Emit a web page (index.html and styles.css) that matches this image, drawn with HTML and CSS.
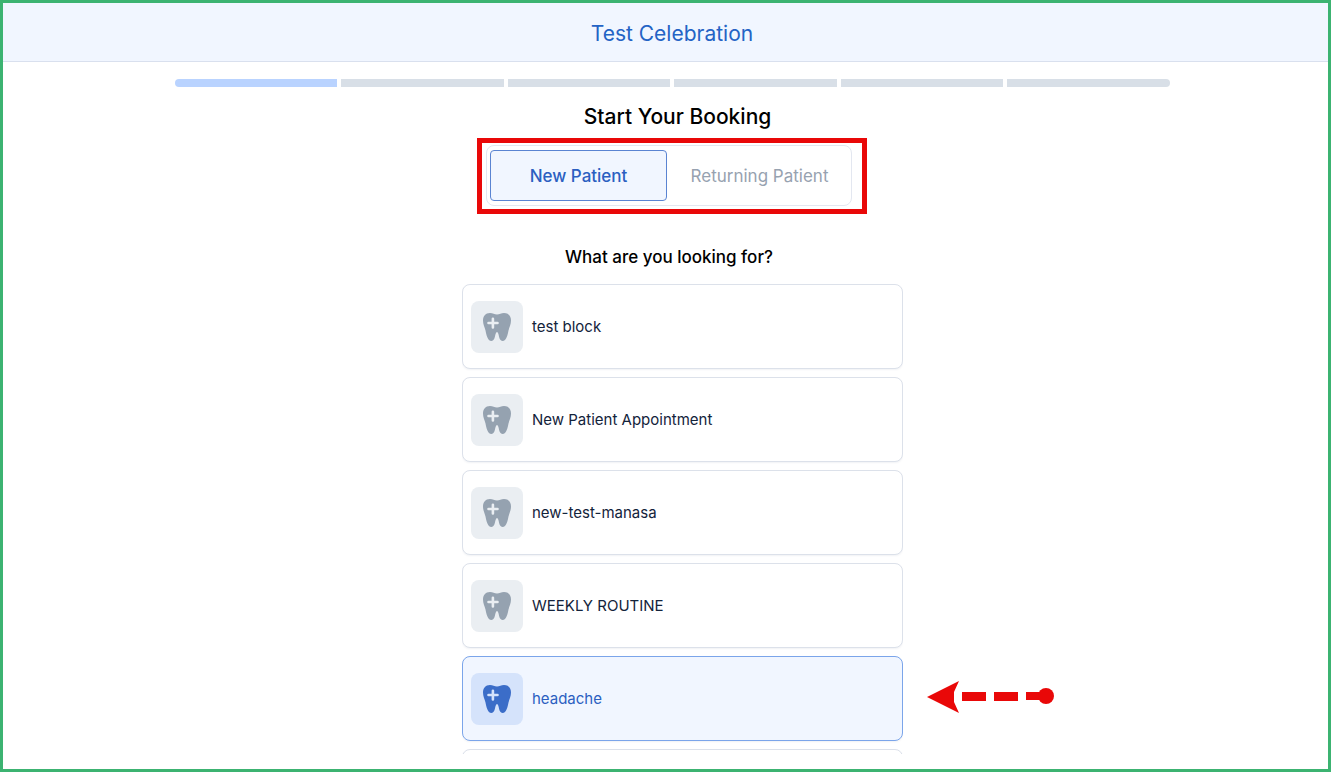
FILE: index.html
```html
<!DOCTYPE html>
<html lang="en">
<head>
    <meta charset="UTF-8">
    <meta name="viewport" content="width=device-width, initial-scale=1.0">
    <title>Test Celebration</title>
    <link rel="stylesheet" href="styles.css">
</head>
<body>
    <svg class="sprite" aria-hidden="true">
        <symbol id="tooth" viewBox="0 0 28 28">
            <path fill-rule="evenodd" d="M7 0C2.400 0 0 3.200 0 7.500c0 4.100 1.700 6.600 2.500 10C3.400 21.700 4.500 28 8.500 28c4.300 0 3.200-9 5.500-9S15.200 28 19.500 28c4 0 5.100-6.300 6-10.500.8-3.400 2.500-5.900 2.500-10C28 3.200 25.600 0 21 0c-2.800 0-4.500 1.400-7 1.400S9.800 0 7 0zM9.900 4.500a1.300 1.300 0 0 1 1.300 1.300V8.700h3.300a1.300 1.300 0 0 1 0 2.600H11.200v3.200a1.300 1.300 0 0 1-2.600 0V11.300H5.500a1.300 1.300 0 0 1 0-2.600H8.600V5.800A1.300 1.300 0 0 1 9.900 4.500z"/>
        </symbol>
    </svg>

    <header class="header">
        <h1>Test Celebration</h1>
    </header>

    <main>
        <div class="progress">
            <span class="step done"></span>
            <span class="step"></span>
            <span class="step"></span>
            <span class="step"></span>
            <span class="step"></span>
            <span class="step"></span>
        </div>

        <h2>Start Your Booking</h2>

        <div class="highlight">
            <div class="toggle">
                <button type="button" class="active">New Patient</button>
                <button type="button">Returning Patient</button>
            </div>
        </div>

        <h3>What are you looking for?</h3>

        <div class="services">
            <div class="list">
                <button type="button" class="card">
                    <span class="icon"><svg><use href="#tooth"/></svg></span>
                    test block
                </button>
                <button type="button" class="card">
                    <span class="icon"><svg><use href="#tooth"/></svg></span>
                    New Patient Appointment
                </button>
                <button type="button" class="card">
                    <span class="icon"><svg><use href="#tooth"/></svg></span>
                    new-test-manasa
                </button>
                <button type="button" class="card">
                    <span class="icon"><svg><use href="#tooth"/></svg></span>
                    WEEKLY ROUTINE
                </button>
                <button type="button" class="card selected">
                    <span class="icon"><svg><use href="#tooth"/></svg></span>
                    headache
                </button>
                <button type="button" class="card"></button>
            </div>
            <svg class="arrow" viewBox="0 0 128 32" aria-hidden="true">
                <path d="M0 16L32 0L27 11V21L32 32z"/>
                <path d="M35 11h24v9H35zM67 11h24v9H67zM99 11h16v8H99z"/>
                <circle cx="119" cy="15" r="8"/>
            </svg>
        </div>
    </main>
</body>
</html>
```
FILE: styles.css
```css
* {
    box-sizing: border-box;
}

body {
    margin: 0;
    height: 100vh;
    overflow: hidden;
    border: 3px solid #3cb371;
    background: #fff;
    color: #000;
    font-family: Inter, "Liberation Sans", sans-serif;
}

h1, h2, h3 {
    margin: 0;
    font-weight: 500;
    text-align: center;
}

button {
    font-family: inherit;
    cursor: pointer;
}

.sprite {
    display: none;
}

.header {
    height: 59px;
    padding: 15px 0 0 13px;
    background: #f1f6ff;
    border-bottom: 1px solid #d9e0ee;
}

.header h1 {
    color: #2463c5;
    font-size: 21px;
    font-weight: 400;
    line-height: 32px;
}

main {
    display: flex;
    flex-direction: column;
    align-items: center;
    padding: 17px 0 0 13px;
}

.progress {
    display: flex;
    gap: 4px;
    width: 100%;
    max-width: 995px;
    height: 8px;
    border-radius: 4px;
    overflow: hidden;
}

.step {
    flex: 1;
    background: #d8dfe7;
}

.step.done {
    background: #b9d3ff;
}

h2 {
    margin: 14px 0 5px;
    padding-left: 11px;
    font-size: 21px;
    line-height: 32px;
}

.highlight {
    width: 390px;
    padding: 2px 10px 3px 4px;
    border: 5px solid #e90808;
}

.toggle {
    display: flex;
    gap: 4px;
    padding: 4px 3px;
    border: 1px solid #e3e7f0;
    border-radius: 8px;
}

.toggle button {
    flex: 1;
    height: 51px;
    padding: 0;
    border: 1px solid transparent;
    border-radius: 4px;
    background: none;
    color: #97a2b0;
    font-size: 17px;
}

.toggle .active {
    border-color: #5a84d2;
    background: #f1f6ff;
    color: #2b5fc1;
    font-weight: 500;
}

h3 {
    margin: 31px 6px 15px 0;
    font-size: 17px;
    line-height: 24px;
}

.services {
    position: relative;
    width: 441px;
    margin-left: 21px;
}

.list {
    display: flex;
    flex-direction: column;
    gap: 8px;
    max-height: calc(100vh - 302px);
    overflow: hidden;
}

.card {
    display: flex;
    flex: none;
    align-items: center;
    gap: 9px;
    height: 85px;
    padding: 0 8px;
    border: 1px solid #dce1ea;
    border-radius: 8px;
    background: #fff;
    box-shadow: 0 1px 2px rgba(20, 40, 80, 0.06);
    color: #13233b;
    font-size: 15px;
    text-align: left;
}

.icon {
    display: flex;
    align-items: center;
    justify-content: center;
    width: 52px;
    height: 52px;
    border-radius: 8px;
    background: #eaeef2;
    color: #95a2b0;
}

.icon svg {
    width: 28px;
    height: 28px;
    fill: currentColor;
}

.card.selected {
    border-color: #7ba5ea;
    background: #f1f6ff;
    color: #2b5fc1;
}

.selected .icon {
    background: #d5e3fb;
    color: #3b6dc8;
}

.arrow {
    position: absolute;
    top: 397px;
    left: 465px;
    width: 128px;
    height: 32px;
    fill: #e90808;
}
```
